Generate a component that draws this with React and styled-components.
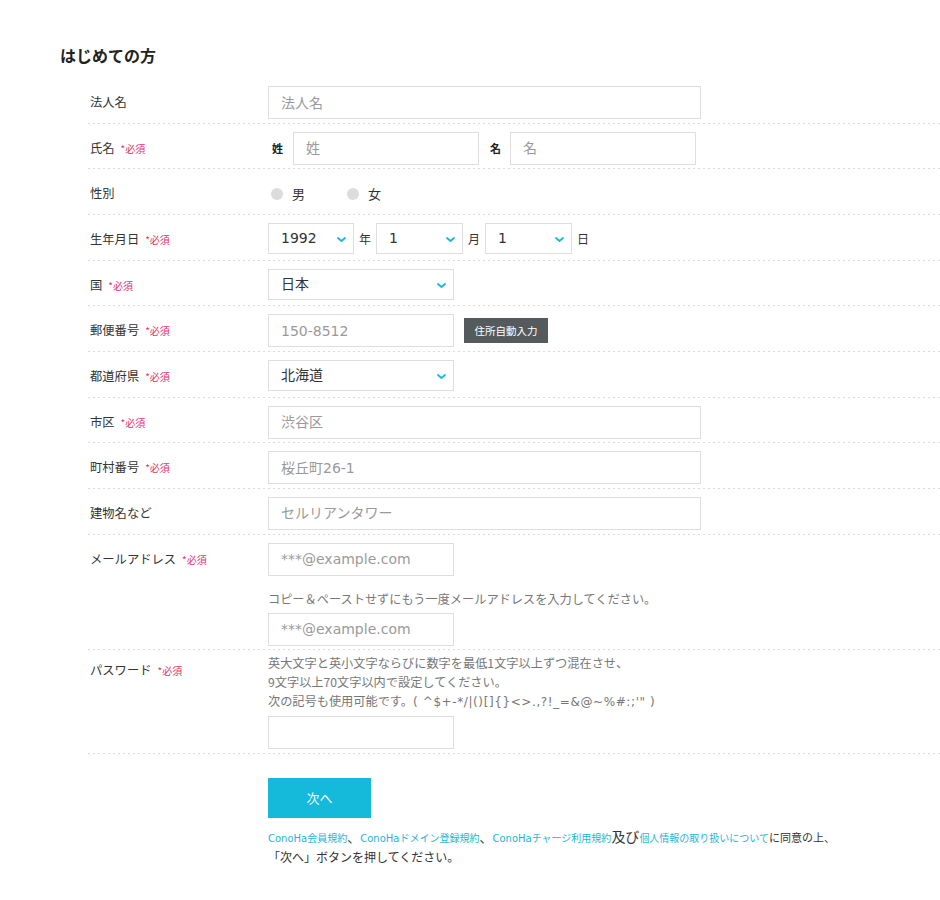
import React from "react";
import styled, { createGlobalStyle } from "styled-components";

const GlobalStyle = createGlobalStyle`
  body {
    margin: 0;
    background: #fff;
    color: #333;
    font-family: "DejaVu Sans", "Noto Sans CJK JP", sans-serif;
  }
  * { box-sizing: border-box; }
`;

const FONT = `"DejaVu Sans", "Noto Sans CJK JP", sans-serif`;
const CYAN = "#15b9d9";

const Page = styled.div`
  padding: 46px 0 40px 60px;
  width: 940px;
`;

const Heading = styled.h2`
  margin: 0 0 14px;
  font-family: "Noto Sans CJK JP", sans-serif;
  font-size: 16px;
  line-height: 18px;
  font-weight: 700;
  color: #222;
`;

const Form = styled.div`
  margin-left: 28px;
`;

const Row = styled.div`
  display: flex;
  padding: ${(p) => (p.$tight ? "4px" : "8px")} 0 4.67px;
  background-image: repeating-linear-gradient(
    to right,
    #dcdcdc 0,
    #dcdcdc 2px,
    transparent 2px,
    transparent 5px
  );
  background-size: 100% 1px;
  background-repeat: no-repeat;
  background-position: bottom left;
`;

const Label = styled.div`
  width: 180px;
  flex-shrink: 0;
  padding: 7px 0 0 2px;
  font-family: "Noto Sans CJK JP", sans-serif;
  font-size: 12.3px;
  line-height: 18px;
  color: #333;
`;

const Required = styled.span`
  margin-left: 6px;
  font-size: 10px;
  color: #e2346e;
`;

const Value = styled.div`
  flex: 1;
  display: flex;
  flex-direction: column;
`;

const Line = styled.div`
  display: flex;
  align-items: ${(p) => (p.$top ? "flex-start" : "center")};
  min-height: ${(p) => (p.$short ? 31 : 33)}px;
`;

const TextInput = styled.input`
  width: ${(p) => p.$w}px;
  height: 33px;
  border: 1px solid #dedede;
  border-radius: 0;
  padding: 0 12px;
  font-family: ${FONT};
  font-size: 14px;
  color: #333;
  background: #fff;
  outline: none;
  &::placeholder {
    color: #9a9a9a;
  }
`;

const SelectWrap = styled.div`
  position: relative;
  width: ${(p) => p.$w}px;
  height: ${(p) => p.$h || 31}px;
`;

const Select = styled.select`
  appearance: none;
  -webkit-appearance: none;
  width: 100%;
  height: 100%;
  border: 1px solid #dedede;
  border-radius: 0;
  padding: 0 12px;
  background: #fff;
  font-family: ${FONT};
  font-size: 14px;
  color: #333;
  outline: none;
`;

const Chevron = styled.svg`
  position: absolute;
  right: 8px;
  top: 50%;
  margin-top: -1px;
  width: 9px;
  height: 5px;
  pointer-events: none;
`;

const Unit = styled.span`
  margin: 0 5px;
  font-family: "Noto Sans CJK JP", sans-serif;
  font-size: 12px;
  line-height: 31px;
  color: #333;
`;

const NameTag = styled.span`
  margin: 0 ${(p) => p.$after}px 0 ${(p) => p.$before}px;
  font-family: "Noto Sans CJK JP", sans-serif;
  font-size: 11px;
  font-weight: 700;
  color: #222;
`;

const RadioItem = styled.label`
  display: flex;
  align-items: center;
  margin: 0 39px 0 3px;
  font-family: "Noto Sans CJK JP", sans-serif;
  font-size: 13px;
  color: #333;
`;

const RadioDot = styled.span`
  width: 12px;
  height: 12px;
  border-radius: 50%;
  background: #dcdcdc;
  margin-right: 9px;
`;

const AutoButton = styled.button`
  margin-left: 10px;
  width: 84px;
  height: 25px;
  border: none;
  border-radius: 0;
  background: #555b5d;
  color: #fff;
  font-family: "Noto Sans CJK JP", sans-serif;
  font-size: 10.5px;
  padding: 0;
`;

const Help = styled.p`
  margin: ${(p) => p.$mt || 0}px 0 ${(p) => p.$mb || 0}px;
  font-family: "Noto Sans CJK JP", sans-serif;
  font-size: 12.2px;
  line-height: ${(p) => p.$lh || 18}px;
  color: #777;
`;

const HintSymbols = styled.span`
  font-family: "DejaVu Sans", "Noto Sans CJK JP", sans-serif;
  font-size: 12px;
  letter-spacing: 0.6px;
`;

const Submit = styled.div`
  padding-left: 208px;
  margin-top: 24px;
`;

const NextButton = styled.button`
  width: 103px;
  height: 40px;
  border: none;
  border-radius: 0;
  background: ${CYAN};
  color: #fff;
  font-family: "Noto Sans CJK JP", sans-serif;
  font-size: 13px;
  padding: 0;
`;

const Terms = styled.p`
  margin: 9px 0 0;
  font-family: "Noto Sans CJK JP", sans-serif;
  font-size: 12px;
  line-height: 18px;
  color: #333;
`;

const TermText = styled.span`
  font-size: ${(p) => p.$size || 11}px;
`;

const TermLink = styled.a`
  font-size: 10px;
  color: #1fb6d5;
  text-decoration: none;
  font-family: ${FONT};
`;

const ChevronIcon = () => (
  <Chevron viewBox="0 0 9 5">
    <polyline
      points="1,1 4.5,4 8,1"
      fill="none"
      stroke={CYAN}
      strokeWidth="1.8"
      strokeLinecap="round"
      strokeLinejoin="round"
    />
  </Chevron>
);

const Dropdown = ({ w, h, value, options }) => (
  <SelectWrap $w={w} $h={h}>
    <Select defaultValue={value}>
      {options.map((o) => (
        <option key={o}>{o}</option>
      ))}
    </Select>
    <ChevronIcon />
  </SelectWrap>
);

const FieldLabel = ({ text, required }) => (
  <Label>
    {text}
    {required && <Required>*必須</Required>}
  </Label>
);

export default function App() {
  return (
    <>
      <GlobalStyle />
      <Page>
        <Heading>はじめての方</Heading>
        <Form>
          <Row>
            <FieldLabel text="法人名" />
            <Value>
              <Line>
                <TextInput $w={433} placeholder="法人名" />
              </Line>
            </Value>
          </Row>
          <Row>
            <FieldLabel text="氏名" required />
            <Value>
              <Line>
                <NameTag $before={4} $after={10}>姓</NameTag>
                <TextInput $w={186} placeholder="姓" />
                <NameTag $before={11} $after={9}>名</NameTag>
                <TextInput $w={186} placeholder="名" />
              </Line>
            </Value>
          </Row>
          <Row>
            <FieldLabel text="性別" />
            <Value>
              <Line>
                <RadioItem>
                  <RadioDot />男
                </RadioItem>
                <RadioItem>
                  <RadioDot />女
                </RadioItem>
              </Line>
            </Value>
          </Row>
          <Row>
            <FieldLabel text="生年月日" required />
            <Value>
              <Line $top>
                <Dropdown w={86} value="1992" options={["1990", "1991", "1992", "1993"]} />
                <Unit>年</Unit>
                <Dropdown w={87} value="1" options={["1", "2", "3"]} />
                <Unit>月</Unit>
                <Dropdown w={87} value="1" options={["1", "2", "3"]} />
                <Unit>日</Unit>
              </Line>
            </Value>
          </Row>
          <Row>
            <FieldLabel text="国" required />
            <Value>
              <Line $top>
                <Dropdown w={186} h={31} value="日本" options={["日本"]} />
              </Line>
            </Value>
          </Row>
          <Row>
            <FieldLabel text="郵便番号" required />
            <Value>
              <Line>
                <TextInput $w={186} placeholder="150-8512" />
                <AutoButton>住所自動入力</AutoButton>
              </Line>
            </Value>
          </Row>
          <Row>
            <FieldLabel text="都道府県" required />
            <Value>
              <Line $top>
                <Dropdown w={186} h={31} value="北海道" options={["北海道", "東京都"]} />
              </Line>
            </Value>
          </Row>
          <Row>
            <FieldLabel text="市区" required />
            <Value>
              <Line>
                <TextInput $w={433} placeholder="渋谷区" />
              </Line>
            </Value>
          </Row>
          <Row>
            <FieldLabel text="町村番号" required />
            <Value>
              <Line>
                <TextInput $w={433} placeholder="桜丘町26-1" />
              </Line>
            </Value>
          </Row>
          <Row>
            <FieldLabel text="建物名など" />
            <Value>
              <Line>
                <TextInput $w={433} placeholder="セルリアンタワー" />
              </Line>
            </Value>
          </Row>
          <Row>
            <FieldLabel text="メールアドレス" required />
            <Value>
              <Line>
                <TextInput $w={186} placeholder="***@example.com" />
              </Line>
              <Help $mt={14} $mb={5}>
                コピー＆ペーストせずにもう一度メールアドレスを入力してください。
              </Help>
              <Line>
                <TextInput $w={186} placeholder="***@example.com" />
              </Line>
            </Value>
          </Row>
          <Row $tight>
            <FieldLabel text="パスワード" required />
            <Value>
              <Help $lh={19} $mb={4}>
                英大文字と英小文字ならびに数字を最低1文字以上ずつ混在させ、
                <br />
                9文字以上70文字以内で設定してください。
                <br />
                次の記号も使用可能です。
                <HintSymbols>( ^$+-*/|()[]{"{}"}&lt;&gt;.,?!_=&amp;@~%#:;'" )</HintSymbols>
              </Help>
              <Line>
                <TextInput $w={186} type="password" />
              </Line>
            </Value>
          </Row>
        </Form>
        <Submit>
          <NextButton>次へ</NextButton>
          <Terms>
            <TermLink href="#">ConoHa会員規約</TermLink>
            <TermText $size={13}>、</TermText>
            <TermLink href="#">ConoHaドメイン登録規約</TermLink>
            <TermText $size={13}>、</TermText>
            <TermLink href="#">ConoHaチャージ利用規約</TermLink>
            <TermText $size={14}>及び</TermText>
            <TermLink href="#">個人情報の取り扱いについて</TermLink>
            <TermText $size={11}>に同意の上、</TermText>
            <br />
            「次へ」ボタンを押してください。
          </Terms>
        </Submit>
      </Page>
    </>
  );
}
